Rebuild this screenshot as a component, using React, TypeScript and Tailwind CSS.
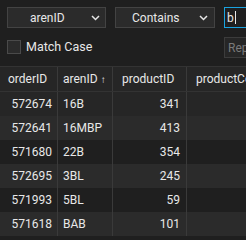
import React from "react";

const rows = [
  { orderID: 572674, arenID: "16B", productID: 341 },
  { orderID: 572641, arenID: "16MBP", productID: 413 },
  { orderID: 571680, arenID: "22B", productID: 354 },
  { orderID: 572695, arenID: "3BL", productID: 245 },
  { orderID: 571993, arenID: "5BL", productID: 59 },
  { orderID: 571618, arenID: "BAB", productID: 101 },
];

const rowBg = ["bg-[#262626]", "bg-[#2b2b2b]", "bg-[#1f1f1f]", "bg-[#2b2b2b]", "bg-[#1f1f1f]", "bg-[#2b2b2b]"];

const Chevron = () => (
  <svg width="9" height="6" viewBox="0 0 9 6" className="shrink-0">
    <path d="M1 1 L4.5 4.5 L8 1" fill="none" stroke="#e6e6e6" strokeWidth="1.5" />
  </svg>
);

export default function App() {
  return (
    <div
      className="w-[246px] h-[240px] overflow-hidden bg-[#1f1f1f] text-[#e8e8e8] text-[12px]"
      style={{ fontFamily: "Roboto, sans-serif" }}
    >
      {/* filter bar */}
      <div className="flex gap-[9px] pl-[7px] pt-[7px] w-[300px]">
        <div className="flex flex-col">
          <div className="flex gap-[9px]">
            <div className="flex items-center w-[99px] h-[21px] bg-[#2b2b2b] border border-[#434343] pl-[22px] pr-[5px]">
              <span className="flex-1">arenID</span>
              <Chevron />
            </div>
            <div className="flex items-center w-[100px] h-[21px] bg-[#2b2b2b] border border-[#434343] pl-[16px] pr-[6px]">
              <span className="flex-1">Contains</span>
              <Chevron />
            </div>
          </div>
          <label className="flex items-center gap-[5px] mt-[12px] h-[14px]">
            <div className="w-[14px] h-[14px] bg-[#2b2b2b] border border-[#4a4a4a]" />
            <span className="text-[12.5px]">Match Case</span>
          </label>
        </div>
        <div className="flex flex-col gap-[9px]">
          <div className="flex items-center w-[60px] h-[21px] bg-[#1f1f1f] border border-[#1aa3e0] pl-[2px]">
            <span>b</span>
            <span className="w-px h-[13px] bg-[#e8e8e8] ml-px" />
          </div>
          <div className="flex items-center w-[60px] h-[21px] bg-[#262626] border border-[#3c3c3c] pl-[3px] text-[#7a7a7a]">
            Replace
          </div>
        </div>
      </div>

      {/* grid */}
      <div className="mt-[8px] w-[300px] border-t border-[#333]">
        <div className="flex h-[25px] bg-[#262626] border-b border-[#333]">
          <div className="w-[58px] flex items-center pl-[8px] border-r border-[#3a3a3a]">orderID</div>
          <div className="w-[55px] flex items-center pl-[5px] border-r border-[#3a3a3a]">
            arenID<span className="ml-[3px] text-[10px]">↑</span>
          </div>
          <div className="w-[74px] flex items-center pl-[9px] border-r border-[#3a3a3a]">productID</div>
          <div className="flex-1 flex items-center pl-[9px]">productCode</div>
        </div>
        {rows.map((r, i) => (
          <div key={r.orderID} className={`flex h-[24px] ${rowBg[i]}`}>
            <div className="w-[58px] flex items-center justify-end pr-[5px] border-r border-[#3a3a3a]">{r.orderID}</div>
            <div className="w-[55px] flex items-center pl-[5px] border-r border-[#3a3a3a]">{r.arenID}</div>
            <div className="w-[74px] flex items-center justify-end pr-[6px] border-r border-[#3a3a3a]">{r.productID}</div>
            <div className="flex-1" />
          </div>
        ))}
      </div>
    </div>
  );
}
